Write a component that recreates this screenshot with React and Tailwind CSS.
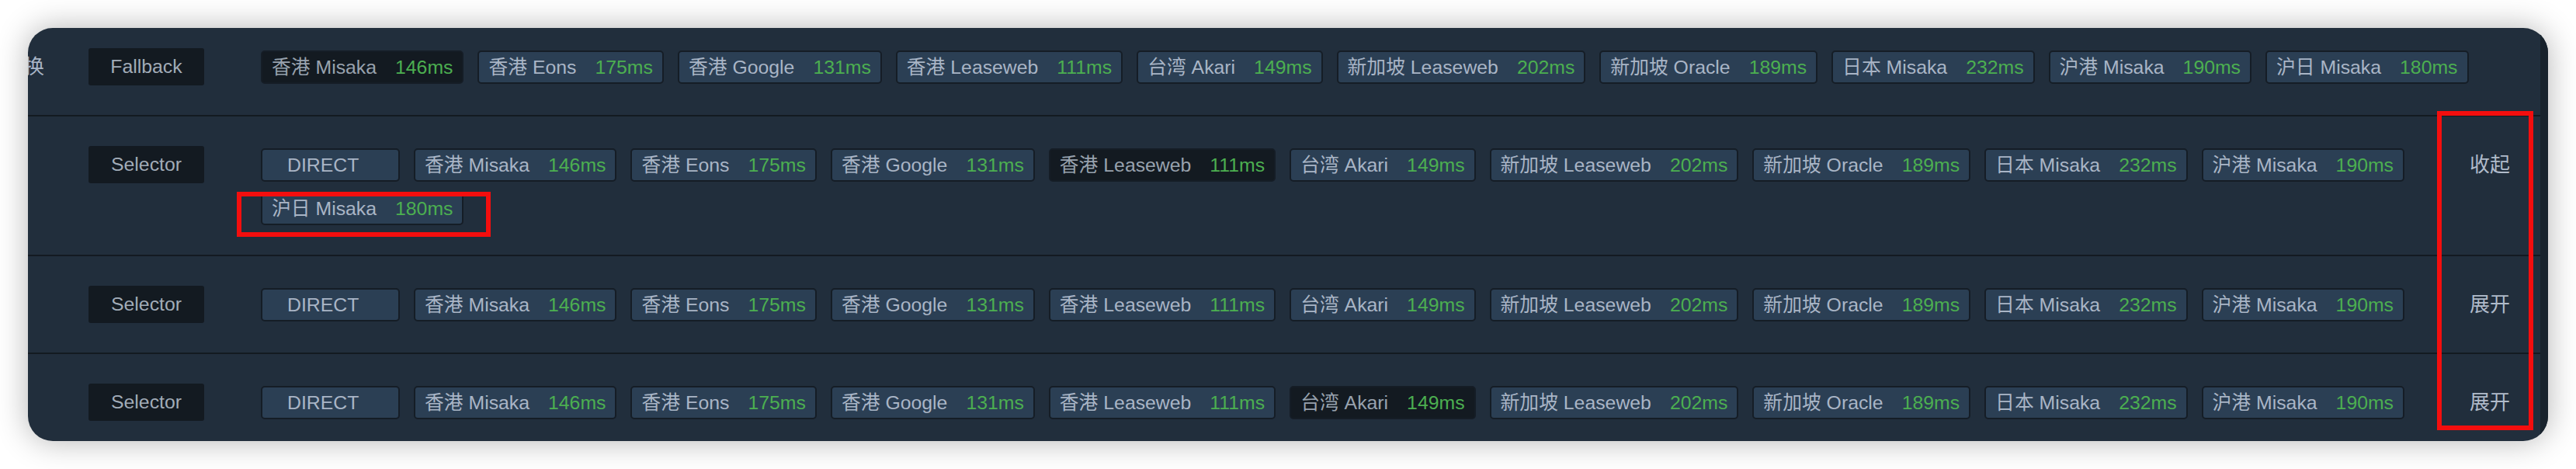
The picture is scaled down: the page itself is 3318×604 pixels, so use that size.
import React from 'react';

const nodes = [
  { name: '香港 Misaka', delay: 146 },
  { name: '香港 Eons', delay: 175 },
  { name: '香港 Google', delay: 131 },
  { name: '香港 Leaseweb', delay: 111 },
  { name: '台湾 Akari', delay: 149 },
  { name: '新加坡 Leaseweb', delay: 202 },
  { name: '新加坡 Oracle', delay: 189 },
  { name: '日本 Misaka', delay: 232 },
  { name: '沪港 Misaka', delay: 190 },
  { name: '沪日 Misaka', delay: 180 },
];

const groups = [
  { label: '自动切换', type: 'Fallback', direct: false, selected: '香港 Misaka', toggle: null },
  { label: '', type: 'Selector', direct: true, selected: '香港 Leaseweb', toggle: '收起', open: true },
  { label: '', type: 'Selector', direct: true, selected: null, toggle: '展开', open: false },
  { label: '', type: 'Selector', direct: true, selected: '台湾 Akari', toggle: '展开', open: false },
];

const Chip = ({ node, active }) => (
  <div
    className={`flex h-[43px] items-center rounded-[5px] border-2 border-[#151d26] px-[12px] whitespace-nowrap ${
      active ? 'bg-[#131a21] text-[#98a2ae]' : 'bg-[#2b3f54] text-[#a9b5c6]'
    }`}
  >
    <span>{node.name}</span>
    <span className="ml-[24px] text-[#4caf50]">{node.delay}ms</span>
  </div>
);

const DirectChip = ({ active }) => (
  <div
    className={`flex h-[43px] w-[179px] items-center rounded-[5px] border-2 border-[#151d26] pl-[32px] ${
      active ? 'bg-[#131a21] text-[#98a2ae]' : 'bg-[#2b3f54] text-[#a9b5c6]'
    }`}
  >
    DIRECT
  </div>
);

const GroupRow = ({ group }) => (
  <div className="flex items-start border-b-2 border-[#131a21] py-[38px]">
    <div className="flex h-[48px] w-[121px] shrink-0 items-center justify-end text-[26px] text-[#a9b5c6]">
      {group.label}
    </div>
    <div className="ml-[57px] flex h-[48px] w-[149px] shrink-0 items-center justify-center rounded-[3px] bg-[#131a21] text-[#a2acb8]">
      {group.type}
    </div>
    <div
      className={`ml-[73px] flex min-w-0 flex-1 flex-wrap gap-x-[18px] gap-y-[13px] pt-[3px] ${
        group.open === false ? 'h-[48px] overflow-hidden' : ''
      }`}
    >
      {group.direct && <DirectChip active={false} />}
      {nodes.map((n) => (
        <Chip key={n.name} node={n} active={n.name === group.selected} />
      ))}
    </div>
    {group.toggle && (
      <div className="flex h-[48px] w-[130px] shrink-0 items-center justify-center text-[26px] text-[#b0bbca]">
        {group.toggle}
      </div>
    )}
  </div>
);

export default function App() {
  return (
    <div
      className="min-h-screen bg-white p-[36px] text-[24.8px]"
      style={{ fontFamily: '"Liberation Sans", "Noto Sans CJK SC", sans-serif' }}
    >
      <div className="relative flex h-[532px] overflow-hidden rounded-[32px] bg-[#212e3c] shadow-[0_0_40px_rgba(0,0,0,0.3)]">
        <div className="min-w-0 flex-1 overflow-hidden">
          {/* scrolled a little to the right and down */}
          <div className="-mt-[12px] -ml-[100px]">
            {groups.map((g, i) => (
              <GroupRow key={i} group={g} />
            ))}
          </div>
        </div>
        <div className="w-[10px] shrink-0 bg-[#18222c]" />

        {/* annotation boxes */}
        <div className="absolute left-[269px] top-[211px] h-[58px] w-[327px] border-[6px] border-[#f40e0e]" />
        <div className="absolute left-[3103px] top-[107px] h-[411px] w-[124px] border-[6px] border-[#f40e0e]" />
      </div>
    </div>
  );
}
